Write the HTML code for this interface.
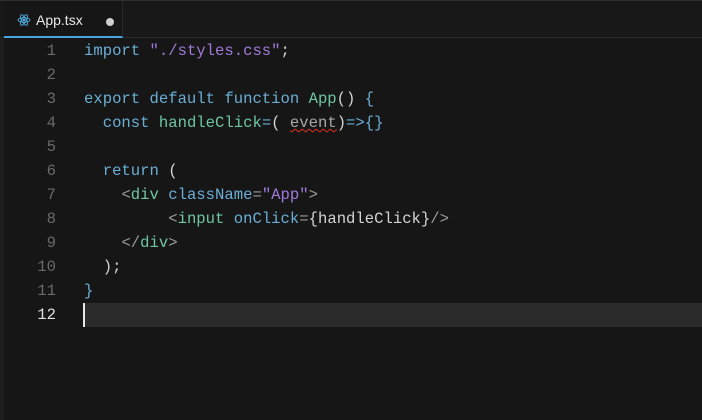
<!DOCTYPE html>
<html><head><style>
body{margin:0;width:702px;height:420px;background:#161616;overflow:hidden;font-family:"Liberation Mono",monospace;}
.tabbar{position:absolute;left:0;top:0;width:702px;height:38px;background:#181818;border-bottom:1px solid #2a2a2a;border-top:1px solid #2e2e2e;box-sizing:border-box}
.tab{position:absolute;left:4px;top:1px;width:119px;height:37px;background:#161616;border-right:1px solid #2a2a2a;border-bottom:2px solid #4aa3e0;box-sizing:border-box}
.tab .n{position:absolute;left:32px;top:11px;font:14px "Liberation Sans",sans-serif;color:#e8e8e8}
.tab .d{position:absolute;left:102px;top:17px;width:8px;height:8px;border-radius:50%;background:#cfcfcf}
.gut{position:absolute;left:0;top:38px;width:4px;height:382px;background:#1e1e1e}
.cur{position:absolute;left:84px;top:303px;width:618px;height:24px;background:#2b2b2b}
.caret{position:absolute;left:83px;top:303px;width:2px;height:24px;background:#e8e8e8}
.ln{position:absolute;left:0;width:56px;text-align:right;color:#6a6a6a;font-size:15.6px;line-height:24px}
.code{position:absolute;left:84px;font-size:15.6px;line-height:24px;white-space:pre;color:#d4d4d4}
.k{color:#6aaed6}.f{color:#6ec6a4}.s{color:#a07ad8}.p{color:#9a9a9a}.e{color:#a8a8a8;text-decoration:underline wavy #e0301e;text-decoration-thickness:1px}
</style></head><body>
<div class="tabbar"></div>
<div class="tab">
<svg style="position:absolute;left:13px;top:12px" width="14" height="14" viewBox="-7 -7 14 14" fill="none" stroke="#4fa8d8" stroke-width="0.9"><ellipse rx="6" ry="2.3"/><ellipse rx="6" ry="2.3" transform="rotate(60)"/><ellipse rx="6" ry="2.3" transform="rotate(-60)"/><circle r="1" fill="#4fa8d8"/></svg>
<span class="n">App.tsx</span><span class="d"></span></div>
<div class="gut"></div>
<div class="cur"></div><div class="caret"></div>
<div class="ln" style="top:39px">1<br>2<br>3<br>4<br>5<br>6<br>7<br>8<br>9<br>10<br>11<br><span style="color:#e0e0e0">12</span></div>
<div class="code" style="top:39px"><span class="k">import</span> <span class="s">"./styles.css"</span>;

<span class="k">export default function</span> <span class="f">App</span>() <span class="k">{</span>
  <span class="k">const</span> <span class="f">handleClick</span><span class="k">=</span>( <span class="e">event</span>)<span class="k">=&gt;{}</span>

  <span class="k">return</span> (
    <span class="p">&lt;</span><span class="f">div</span> <span class="k">className</span><span class="p">=</span><span class="s">"App"</span><span class="p">&gt;</span>
         <span class="p">&lt;</span><span class="f">input</span> <span class="k">onClick</span><span class="p">=</span>{handleClick}<span class="p">/&gt;</span>
    <span class="p">&lt;/</span><span class="f">div</span><span class="p">&gt;</span>
  );
<span class="k">}</span>
</div>
</body></html>
